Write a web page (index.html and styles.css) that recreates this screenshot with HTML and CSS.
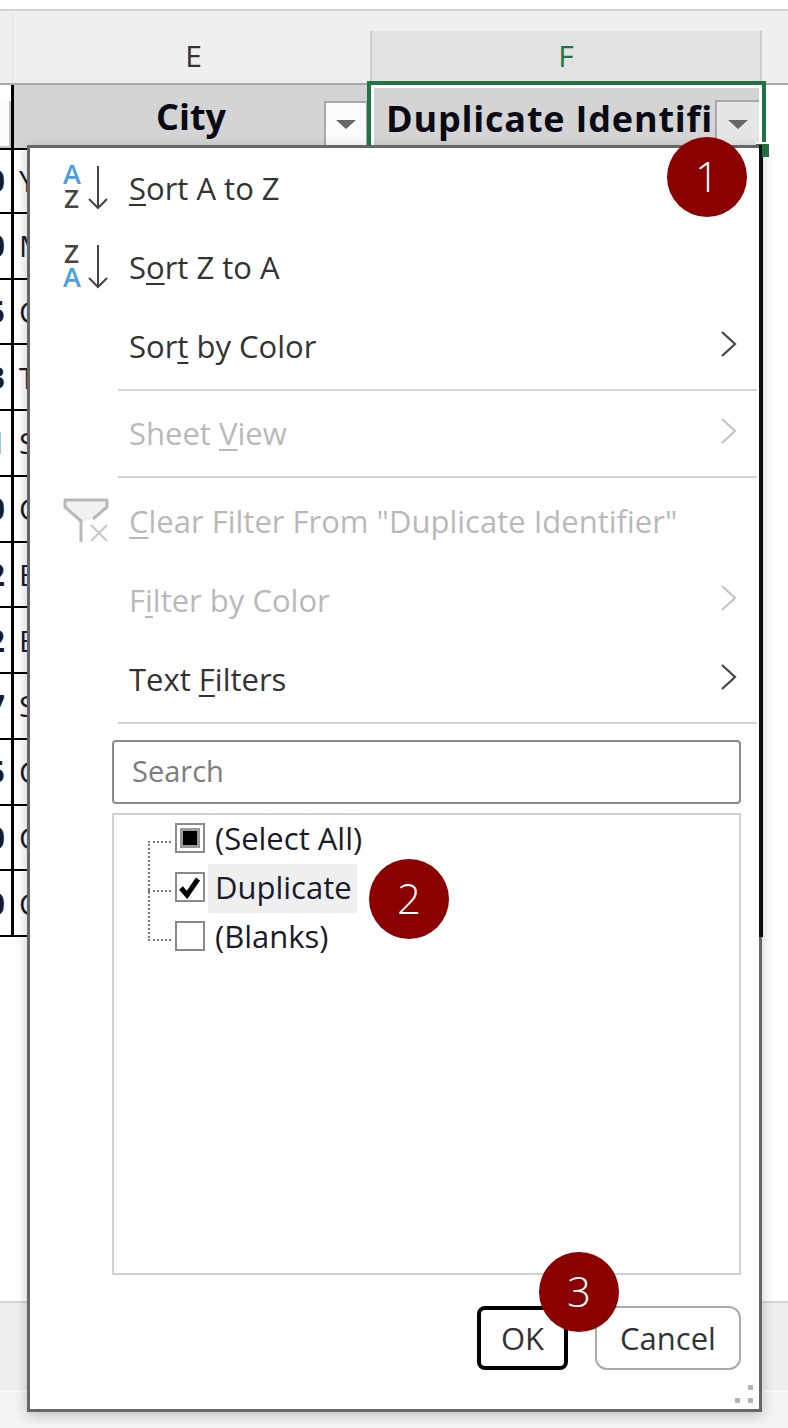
FILE: index.html
```html
<!DOCTYPE html>
<html lang="en">
<head>
  <meta charset="UTF-8">
  <meta name="viewport" content="width=device-width, initial-scale=1.0">
  <title>Filter menu</title>
  <link rel="stylesheet" href="styles.css">
</head>
<body>
  <div class="sheet">
    <div class="top-bar"></div>

    <!-- Column letters -->
    <div class="col-heads">
      <div class="col-gap"></div>
      <div class="col-e">E</div>
      <div class="col-f">F</div>
      <div class="col-rest"></div>
    </div>

    <!-- Table behind the menu -->
    <div class="table">
      <div class="head-row">
        <div class="head-stub"></div>
        <div class="head-cell head-city">
          <span class="head-text">City</span>
          <span class="drop-btn"><i class="caret"></i></span>
        </div>
        <div class="head-cell head-dup">
          <span class="head-text">Duplicate Identifier</span>
          <span class="drop-btn drop-active"><i class="caret"></i></span>
          <i class="sel-handle"></i>
        </div>
      </div>
      <div class="row"><span class="num">10</span><span class="txt">York</span></div>
      <div class="row"><span class="num">10</span><span class="txt">Miami</span></div>
      <div class="row"><span class="num">15</span><span class="txt">Chicago</span></div>
      <div class="row"><span class="num">13</span><span class="txt">Tampa</span></div>
      <div class="row"><span class="num">11</span><span class="txt">Seattle</span></div>
      <div class="row"><span class="num">10</span><span class="txt">Chicago</span></div>
      <div class="row"><span class="num">12</span><span class="txt">Boston</span></div>
      <div class="row"><span class="num">12</span><span class="txt">Boston</span></div>
      <div class="row"><span class="num">17</span><span class="txt">Seattle</span></div>
      <div class="row"><span class="num">15</span><span class="txt">Chicago</span></div>
      <div class="row"><span class="num">10</span><span class="txt">Chicago</span></div>
      <div class="row"><span class="num">10</span><span class="txt">Chicago</span></div>
    </div>

    <div class="blank"></div>
    <div class="status-bar"></div>
    <div class="foot-bar"></div>

    <!-- Filter dropdown -->
    <div class="menu">
      <i class="menu-edge"></i>

      <div class="item">
        <span class="item-icon">
          <svg width="46" height="46" viewBox="0 0 46 46">
            <text class="az-blue" x="0" y="19">A</text>
            <text class="az-dark" x="1" y="43">Z</text>
            <path d="M35 1V43M26 34L35 43L44 34" fill="none" stroke="#444" stroke-width="2"/>
          </svg>
        </span>
        <span class="item-label"><u>S</u>ort A to Z</span>
      </div>
      <div class="item">
        <span class="item-icon">
          <svg width="46" height="46" viewBox="0 0 46 46">
            <text class="az-dark" x="1" y="19">Z</text>
            <text class="az-blue" x="0" y="43">A</text>
            <path d="M35 1V43M26 34L35 43L44 34" fill="none" stroke="#444" stroke-width="2"/>
          </svg>
        </span>
        <span class="item-label">S<u>o</u>rt Z to A</span>
      </div>
      <div class="item">
        <span class="item-icon"></span>
        <span class="item-label">Sor<u>t</u> by Color</span>
        <svg class="chevron" width="18" height="28" viewBox="0 0 18 28"><path d="M2 2L15 14L2 26" fill="none" stroke="#444" stroke-width="2.2"/></svg>
      </div>
      <div class="sep"></div>
      <div class="item disabled">
        <span class="item-icon"></span>
        <span class="item-label">Sheet <u>V</u>iew</span>
        <svg class="chevron" width="18" height="28" viewBox="0 0 18 28"><path d="M2 2L15 14L2 26" fill="none" stroke="#c4c4c4" stroke-width="2.2"/></svg>
      </div>
      <div class="sep sep-wide"></div>
      <div class="item disabled">
        <span class="item-icon">
          <svg width="46" height="46" viewBox="0 0 46 46">
            <path d="M2 2H44V9L30 21L20 24L2 9Z" fill="#f1f1f1"/>
            <path d="M1 2H45M2 2V9L18 23V44M44 2V9L30 21" fill="none" stroke="#b8b8b8" stroke-width="3"/>
            <path d="M28 27L44 43M44 27L28 43" stroke="#c8c8c8" stroke-width="2.2"/>
          </svg>
        </span>
        <span class="item-label"><u>C</u>lear Filter From "Duplicate Identifier"</span>
      </div>
      <div class="item disabled">
        <span class="item-icon"></span>
        <span class="item-label">F<u>i</u>lter by Color</span>
        <svg class="chevron" width="18" height="28" viewBox="0 0 18 28"><path d="M2 2L15 14L2 26" fill="none" stroke="#c4c4c4" stroke-width="2.2"/></svg>
      </div>
      <div class="item">
        <span class="item-icon"></span>
        <span class="item-label">Text <u>F</u>ilters</span>
        <svg class="chevron" width="18" height="28" viewBox="0 0 18 28"><path d="M2 2L15 14L2 26" fill="none" stroke="#444" stroke-width="2.2"/></svg>
      </div>
      <div class="sep"></div>

      <div class="search">Search</div>

      <div class="list">
        <div class="tree">
          <div class="tree-row">
            <span class="check check-mixed"><i></i></span>
            <span class="tree-label">(Select All)</span>
          </div>
          <div class="tree-row">
            <span class="check">
              <svg width="24" height="24" viewBox="0 0 24 24"><path d="M3 13L9 20L20 4" fill="none" stroke="#000" stroke-width="5"/></svg>
            </span>
            <span class="tree-label tree-hover">Duplicate</span>
          </div>
          <div class="tree-row">
            <span class="check"></span>
            <span class="tree-label">(Blanks)</span>
          </div>
        </div>
      </div>

      <div class="buttons">
        <button class="btn btn-ok">OK</button>
        <button class="btn btn-cancel">Cancel</button>
      </div>

      <div class="grip">
        <i class="grip-dot dot-a"></i>
        <i class="grip-dot dot-b"></i>
        <i class="grip-dot dot-c"></i>
      </div>
    </div>

    <!-- Numbered callouts -->
    <div class="badge badge-1">1</div>
    <div class="badge badge-2">2</div>
    <div class="badge badge-3">3</div>
  </div>
</body>
</html>
```

FILE: styles.css
```css
/* Global Styles */
html, body {
  margin: 0;
  padding: 0;
  background: #fff;
}

.sheet {
  position: relative;
  width: 788px;
  height: 1428px;
  overflow: hidden;
  display: flex;
  flex-direction: column;
  font-family: 'Open Sans', 'Noto Sans', sans-serif;
  color: #333;
}

.top-bar {
  height: 9px;
  background: #fff;
  border-bottom: 2px solid #d2d2d2;
  flex: none;
}

/* Column letters */
.col-heads {
  display: flex;
  height: 72px;
  flex: none;
  background: #efefef;
  border-bottom: 2px solid #a9a9a9;
  font-size: 30px;
}

.col-gap {
  width: 12px;
  border-right: 1px solid #e2e2e2;
}

.col-e {
  width: 357px;
  display: flex;
  align-items: flex-end;
  justify-content: center;
  padding: 0 0 7px 4px;
  box-sizing: border-box;
  color: #333;
}

.col-f {
  width: 392px;
  margin-top: 20px;
  display: flex;
  align-items: flex-end;
  justify-content: center;
  padding-bottom: 7px;
  box-sizing: border-box;
  background: #e1e2e1;
  border-left: 2px solid #cfcfcf;
  border-right: 2px solid #cfcfcf;
  color: #217346;
}

.col-rest {
  flex: 1;
}

/* Table */
.table {
  width: 763px;
  flex: none;
  border-right: 3px solid #000;
  box-sizing: border-box;
}

.head-row {
  display: flex;
  height: 63px;
}

.head-stub {
  width: 11px;
  flex: none;
  background: #fbfbfb;
  border: 2px solid #c4c4c4;
  border-left: 0;
  border-top: 0;
  margin-top: 16px;
  box-sizing: border-box;
}

.head-cell {
  position: relative;
  display: flex;
  align-items: center;
  background: #d4d4d4;
  font-weight: 700;
  font-size: 36px;
  color: #0a0a14;
  box-sizing: border-box;
}

.head-city {
  width: 357px;
  flex: none;
  border-left: 3px solid #000;
  justify-content: center;
}

.head-dup {
  flex: none;
  width: 399px;
  height: 67px;
  margin: -4px -6px 0 -1px;
  padding-left: 15px;
  border: 4px solid #217346;
  border-bottom: 0;
  box-shadow: inset 0 3px 0 #fff, inset 3px 0 0 #fff, inset -3px 0 0 #fff;
  white-space: nowrap;
  z-index: 1;
}

.head-dup .head-text {
  letter-spacing: 0.8px;
  width: 327px;
  overflow: hidden;
  padding-top: 4px;
}

.drop-btn {
  position: absolute;
  top: 16px;
  right: 0;
  width: 44px;
  height: 46px;
  box-sizing: border-box;
  display: flex;
  align-items: center;
  justify-content: center;
  background: #fbfbfb;
  border: 2px solid #a8a8a8;
}

.drop-active {
  top: 15px;
  right: 3px;
  background: #e6e6e6;
  border-right: 0;
  border-bottom: 0;
}

.caret {
  width: 0;
  height: 0;
  border-left: 10px solid transparent;
  border-right: 10px solid transparent;
  border-top: 9px solid #666;
}

.sel-handle {
  position: absolute;
  top: 59px;
  right: -7px;
  width: 13px;
  height: 13px;
  background: #217346;
  box-shadow: 0 -2px 0 #fff;
  z-index: 3;
}

.row {
  display: flex;
  height: 65.75px;
  box-sizing: border-box;
  border-bottom: 2.5px solid #000;
  font-size: 30px;
  color: #1a1a2a;
  overflow: hidden;
}

.head-row + .row {
  border-top: 2.5px solid #000;
}

.num {
  width: 14px;
  flex: none;
  box-sizing: border-box;
  padding-right: 6px;
  border-right: 3px solid #000;
  display: flex;
  justify-content: flex-end;
  align-items: center;
  overflow: hidden;
  white-space: nowrap;
  font-weight: 700;
}

.txt {
  padding-left: 5px;
  display: flex;
  align-items: center;
  white-space: nowrap;
  overflow: hidden;
}

.blank {
  flex: 1;
  border-bottom: 2px solid #d8d8d8;
}

.status-bar {
  height: 87px;
  flex: none;
  background: #eeeeee;
}

.foot-bar {
  height: 38px;
  flex: none;
  box-sizing: border-box;
  border-top: 2px solid #fafafa;
  background: #f3f3f3;
}

/* Popup Styles */
.menu {
  position: absolute;
  top: 145px;
  left: 27px;
  width: 735px;
  height: 1267px;
  box-sizing: border-box;
  background: #fff;
  border: 3px solid #666;
  box-shadow: 0 3px 12px rgba(0, 0, 0, 0.22);
  z-index: 2;
}

.menu-edge {
  position: absolute;
  top: -3px;
  right: -3px;
  width: 3px;
  height: 792px;
  background: #111;
}

.item {
  position: relative;
  display: flex;
  align-items: center;
  height: 79px;
  padding-left: 33px;
  font-size: 31px;
}

.item-icon {
  width: 66px;
  height: 46px;
  flex: none;
}

.item-label {
  white-space: nowrap;
}

.item u {
  text-decoration-thickness: 2px;
  text-underline-offset: 4px;
}

.disabled {
  color: #b9b9b9;
}

.chevron {
  position: absolute;
  right: 21px;
  top: 24px;
}

.sep {
  height: 2px;
  margin: 4px 2px 2px 88px;
  background: #d4d4d4;
}

.sep-wide {
  margin-bottom: 3px;
}

.az-blue {
  font-size: 27px;
  font-weight: 600;
  fill: #4a9fdf;
}

.az-dark {
  font-size: 26px;
  font-weight: 600;
  fill: #444;
}

.search {
  height: 64px;
  margin: 16px 18px 0 82px;
  box-sizing: border-box;
  display: flex;
  align-items: center;
  padding: 0 0 3px 18px;
  border: 2.5px solid #8a8a8a;
  border-radius: 4px;
  font-size: 29px;
  color: #7c7c7c;
}

.list {
  height: 462px;
  margin: 9px 18px 0 82px;
  box-sizing: border-box;
  border: 2.5px solid #d2d2d2;
  padding-left: 34px;
}

.tree {
  position: relative;
  display: flex;
  flex-direction: column;
  margin-top: -2px;
  font-size: 31px;
  color: #1a1a2a;
}

.tree::before {
  content: "";
  position: absolute;
  left: 0;
  top: 28px;
  height: 100px;
  border-left: 2px dotted #777;
}

.tree-row {
  display: flex;
  align-items: center;
  height: 49px;
  padding-left: 27px;
  position: relative;
}

.tree-row::before {
  content: "";
  position: absolute;
  left: 0;
  top: 28px;
  width: 23px;
  border-top: 2px dotted #777;
}

.check {
  width: 30px;
  height: 30px;
  flex: none;
  box-sizing: border-box;
  background: #fff;
  border: 2.5px solid #8a8a8a;
  display: flex;
  align-items: center;
  justify-content: center;
}

.check-mixed i {
  display: block;
  width: 14px;
  height: 14px;
  background: #000;
  border: 3px solid #999;
}

.tree-label {
  display: flex;
  align-items: center;
  box-sizing: border-box;
  height: 49px;
  padding: 0 5px 4px 7px;
  margin: 4px 0 0 3px;
}

.tree-hover {
  background: #efefef;
}

.buttons {
  display: flex;
  justify-content: flex-end;
  gap: 27px;
  margin: 31px 18px 0 0;
}

.btn {
  height: 64px;
  box-sizing: border-box;
  background: #fff;
  font-family: inherit;
  font-size: 31px;
  color: #333;
  padding: 0;
}

.btn-ok {
  width: 91px;
  border: 4px solid #000;
  border-radius: 8px;
}

.btn-cancel {
  width: 146px;
  border: 2px solid #aaa;
  border-radius: 12px;
}

.grip {
  position: absolute;
  right: 6px;
  bottom: 6px;
  width: 18px;
  height: 18px;
}

.grip-dot {
  position: absolute;
  width: 5px;
  height: 5px;
  background: #b4b4b4;
}

.dot-a { right: 0; top: 0; }
.dot-b { right: 0; bottom: 0; }
.dot-c { left: 0; bottom: 0; }

/* Callouts */
.badge {
  position: absolute;
  width: 80px;
  height: 80px;
  border-radius: 50%;
  background: #8b0000;
  color: #fff;
  font-size: 42px;
  font-weight: 300;
  line-height: 77px;
  text-align: center;
  z-index: 4;
}

.badge-1 { left: 667px; top: 137px; }
.badge-2 { left: 369px; top: 859px; }
.badge-3 { left: 539px; top: 1252px; }
```
